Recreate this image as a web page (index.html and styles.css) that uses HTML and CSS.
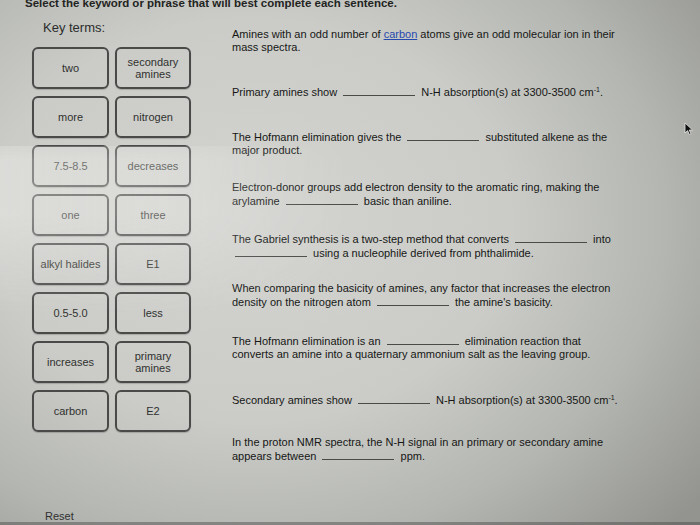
FILE: index.html
```html
<!DOCTYPE html>
<html lang="en">
<head>
<meta charset="utf-8">
<title>Amines – key terms</title>
<link rel="stylesheet" href="styles.css">
</head>
<body>
<div class="page">
  <h1 class="prompt">Select the keyword or phrase that will best complete each sentence.</h1>

  <div class="workspace">
    <aside class="bank">
      <h2 class="bank-title">Key terms:</h2>
      <div class="tiles">
        <div class="tile">two</div>
        <div class="tile">secondary<br>amines</div>
        <div class="tile">more</div>
        <div class="tile">nitrogen</div>
        <div class="tile">7.5-8.5</div>
        <div class="tile">decreases</div>
        <div class="tile">one</div>
        <div class="tile">three</div>
        <div class="tile">alkyl halides</div>
        <div class="tile">E1</div>
        <div class="tile">0.5-5.0</div>
        <div class="tile">less</div>
        <div class="tile">increases</div>
        <div class="tile">primary<br>amines</div>
        <div class="tile">carbon</div>
        <div class="tile">E2</div>
      </div>
    </aside>

    <ol class="sentences">
      <li class="sentence">Amines with an odd number of <a class="filled" href="#">carbon</a> atoms give an odd molecular ion in their mass spectra.</li>
      <li class="sentence">Primary amines show <span class="blank"></span> N-H absorption(s) at 3300-3500 cm<sup>-1</sup>.</li>
      <li class="sentence">The Hofmann elimination gives the <span class="blank"></span> substituted alkene as the major product.</li>
      <li class="sentence">Electron-donor groups add electron density to the aromatic ring, making the arylamine <span class="blank"></span> basic than aniline.</li>
      <li class="sentence">The Gabriel synthesis is a two-step method that converts <span class="blank"></span> into <span class="blank"></span> using a nucleophile derived from phthalimide.</li>
      <li class="sentence">When comparing the basicity of amines, any factor that increases the electron density on the nitrogen atom <span class="blank"></span> the amine's basicity.</li>
      <li class="sentence">The Hofmann elimination is an <span class="blank"></span> elimination reaction that converts an amine into a quaternary ammonium salt as the leaving group.</li>
      <li class="sentence">Secondary amines show <span class="blank"></span> N-H absorption(s) at 3300-3500 cm<sup>-1</sup>.</li>
      <li class="sentence">In the proton NMR spectra, the N-H signal in an primary or secondary amine appears between <span class="blank"></span> ppm.</li>
    </ol>
  </div>

  <button class="reset" type="button">Reset</button>

  <svg class="pointer" width="10" height="14" viewBox="0 0 10 14" aria-hidden="true">
    <path d="M1 1 L1 11 L3.6 8.6 L5.4 12.6 L7 11.9 L5.2 8 L8.6 8 Z" fill="#111" stroke="#e8e8e4" stroke-width="0.8"/>
  </svg>
</div>
</body>
</html>
```

FILE: styles.css
```css
html, body {
  margin: 0;
  padding: 0;
}

body {
  width: 700px;
  height: 525px;
  overflow: hidden;
  font-family: "Liberation Sans", Arial, Helvetica, sans-serif;
  color: #161715;
}

.page {
  position: relative;
  width: 700px;
  height: 525px;
  display: flex;
  flex-direction: column;
  overflow: hidden;
  background:
    radial-gradient(ellipse 82% 85% at 36% 42%, #d3d4d0 0%, #cbccc8 45%, #b4b6b2 72%, #939490 100%);
  box-shadow: inset 0 -3px 0 rgba(70, 72, 68, 0.45);
}

/* soft light patch over the lower part of the term bank */
.page::after {
  content: "";
  position: absolute;
  left: 0;
  top: 146px;
  width: 360px;
  height: 170px;
  pointer-events: none;
  background:
    linear-gradient(to right, rgba(246, 246, 243, 0.38) 0%, rgba(246, 246, 243, 0.3) 45%, rgba(246, 246, 243, 0.1) 75%, rgba(246, 246, 243, 0) 100%);
  -webkit-mask-image: linear-gradient(to bottom, rgba(0,0,0,0.6) 0%, #000 8%, #000 40%, transparent 100%);
  mask-image: linear-gradient(to bottom, rgba(0,0,0,0.6) 0%, #000 8%, #000 40%, transparent 100%);
}

.prompt {
  margin: -2px 0 0 25px;
  font-size: 11.5px;
  line-height: 11px;
  font-weight: bold;
  color: #232422;
}

.workspace {
  display: flex;
  align-items: flex-start;
  gap: 41px;
}

.bank {
  margin-left: 32px;
  display: flex;
  flex-direction: column;
}

.bank-title {
  margin: 11px 0 11px 11px;
  font-size: 13px;
  line-height: 16px;
  font-weight: normal;
  color: #2c2d2b;
}

.tiles {
  display: grid;
  grid-template-columns: 77px 76px;
  grid-auto-rows: 42px;
  column-gap: 6px;
  row-gap: 7px;
}

.tile {
  box-sizing: border-box;
  display: flex;
  align-items: center;
  justify-content: center;
  text-align: center;
  border: 2px solid #4a4b49;
  border-radius: 6px;
  box-shadow: 0 1px 1px rgba(0, 0, 0, 0.18);
  font-size: 11px;
  line-height: 12px;
  color: #30312f;
}

.sentences {
  list-style: none;
  margin: 19px 0 0;
  padding: 0;
  width: 386px;
  display: grid;
  grid-template-rows: 57px 45px 51px 51px 50px 52px 59px 43px auto;
  font-size: 11px;
  line-height: 13px;
}

.sentence {
  margin: 0;
}

.filled {
  color: #2649ad;
  text-decoration: underline;
}

.blank {
  display: inline-block;
  width: 72px;
  height: 10px;
  margin: 0 3px;
  border-bottom: 1px solid #4a4b49;
  vertical-align: baseline;
}

.sentence sup {
  font-size: 7px;
  line-height: 0;
  vertical-align: 4px;
}

.reset {
  margin: auto 0 2px 45px;
  align-self: flex-start;
  padding: 0;
  border: 0;
  background: none;
  font-family: inherit;
  font-size: 11px;
  line-height: 13px;
  color: #30312f;
}

.pointer {
  position: absolute;
  left: 684px;
  top: 122px;
}
```
